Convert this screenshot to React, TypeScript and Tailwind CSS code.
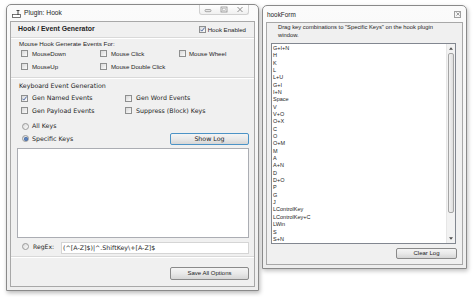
import React from "react";

const UI = "font-['Liberation_Sans',Arial,sans-serif]";
const VD = "font-['DejaVu_Sans',Verdana,sans-serif]";

function Check({ checked }: { checked?: boolean }) {
  return (
    <span className="relative inline-block w-[7px] h-[7px] shrink-0 border border-[#8e8f8f] bg-linear-to-br from-[#d8d8d8] to-[#fbfbfb]">
      {checked && (
        <svg viewBox="0 0 7 7" className="absolute left-[-1px] top-[-1px] w-[7px] h-[7px]">
          <path d="M1.4 3.7 L2.8 5.1 L5.7 1.5" fill="none" stroke="#4f6aa3" strokeWidth="1" />
        </svg>
      )}
    </span>
  );
}

function Radio({ checked }: { checked?: boolean }) {
  return (
    <span className="relative inline-flex items-center justify-center w-[7px] h-[7px] shrink-0 rounded-full border border-[#9a9a9a] bg-linear-to-br from-[#dadada] to-[#fcfcfc]">
      {checked && <span className="block w-[4px] h-[4px] rounded-full bg-radial from-[#6f9ad6] to-[#1d3f7c]" />}
    </span>
  );
}

function Btn({ label, blue, font, w }: { label: string; blue?: boolean; font: string; w: string }) {
  return (
    <div
      className={`${w} h-full flex items-center justify-center rounded-[2px] border ${
        blue ? "border-[#4c93c6]" : "border-[#8a8a8a]"
      } bg-linear-to-b from-[#f4f4f4] via-[#e9e9e9] to-[#d6d6d6] text-[#1a1a1a] ${font}`}
    >
      {label}
    </div>
  );
}

function Sep() {
  return (
    <div className="flex flex-col">
      <div className="h-px bg-[#d9d9d9]" />
      <div className="h-px bg-white" />
    </div>
  );
}

const keys = [
  "G+I+N",
  "H",
  "K",
  "L",
  "L+U",
  "G+I",
  "I+N",
  "Space",
  "V",
  "V+O",
  "O+X",
  "C",
  "O",
  "O+M",
  "M",
  "A",
  "A+N",
  "D",
  "D+O",
  "P",
  "G",
  "J",
  "LControlKey",
  "LControlKey+C",
  "LWin",
  "S",
  "S+N",
];

export default function App() {
  return (
    <div className="relative w-[474px] h-[297px] bg-white overflow-hidden">
      {/* Left window: Plugin: Hook */}
      <div className="absolute left-[6px] top-[4px] w-[253px] h-[287px] flex flex-col rounded-t-[5px] border border-[#8a8a8a] bg-linear-to-b from-[#fbfbfb] to-[#eeeeee] shadow-[1px_2px_4px_rgba(0,0,0,0.28)]">
        <div className="h-[16px] flex items-center pl-[5px] pr-[9px]">
          <svg viewBox="0 0 9 9" className="w-[9px] h-[9px] shrink-0">
            <rect x="0.5" y="5.5" width="8" height="3" fill="#fff" stroke="#555" strokeWidth="0.8" />
            <path d="M6 6 V1.5 M4.5 1.5 H7.5" stroke="#333" strokeWidth="0.9" fill="none" />
          </svg>
          <span className={`${UI} text-[6.7px] text-[#1e1e1e] ml-[3px] mt-[1px]`}>Plugin: Hook</span>
          <div className="ml-auto self-start h-[10px] w-[50px] flex items-center justify-around border border-t-0 border-[#d0d0d0] rounded-b-[3px] bg-linear-to-b from-[#ffffff] to-[#f0f0f0]">
            <svg viewBox="0 0 8 6" className="w-[8px] h-[6px]">
              <rect x="1" y="2.5" width="6" height="2.2" rx="1" fill="#e8e8e8" stroke="#8d8d8d" strokeWidth="0.7" />
            </svg>
            <svg viewBox="0 0 8 7" className="w-[8px] h-[7px]">
              <rect x="1" y="1" width="6" height="5" fill="none" stroke="#8d8d8d" strokeWidth="0.8" />
              <rect x="2.5" y="2.5" width="3" height="2" fill="none" stroke="#b0b0b0" strokeWidth="0.6" />
            </svg>
            <svg viewBox="0 0 8 7" className="w-[8px] h-[7px]">
              <path d="M1.5 1 L6.5 6 M6.5 1 L1.5 6" stroke="#8d8d8d" strokeWidth="1" />
            </svg>
          </div>
        </div>
        <div className="flex-1 mx-[3px] mb-[3px] border border-[#a8a8a8] bg-[#f0f0f0] flex flex-col text-[#1e1e1e]">
          {/* header */}
          <div className="h-[15px] flex items-center justify-between pl-[7px] pr-[8px]">
            <span className={`${UI} text-[6.9px] font-bold`}>Hook / Event Generator</span>
            <span className="flex items-center gap-[2px]">
              <Check checked />
              <span className={`${UI} text-[6.1px]`}>Hook Enabled</span>
            </span>
          </div>
          <Sep />
          <div className={`h-[9px] flex items-center pl-[8px] ${UI} text-[6.2px]`}>Mouse Hook Generate Events For:</div>
          <div className={`h-[12px] flex items-center pl-[10px] ${UI} text-[6.1px]`}>
            <span className="w-[79px] flex items-center gap-[4px]">
              <Check />
              MouseDown
            </span>
            <span className="w-[79px] flex items-center gap-[4px]">
              <Check />
              Mouse Click
            </span>
            <span className="flex items-center gap-[3px]">
              <Check />
              Mouse Wheel
            </span>
          </div>
          <div className={`h-[13px] flex items-center pl-[10px] ${UI} text-[6.1px]`}>
            <span className="w-[79px] flex items-center gap-[4px]">
              <Check />
              MouseUp
            </span>
            <span className="flex items-center gap-[4px]">
              <Check />
              Mouse Double Click
            </span>
          </div>
          <div className="h-[4px]" />
          <Sep />
          <div className={`h-[13px] flex items-center pl-[8px] ${VD} text-[6.3px]`}>Keyboard Event Generation</div>
          <div className={`h-[12px] flex items-center pl-[10px] ${VD} text-[6.3px]`}>
            <span className="w-[104px] flex items-center gap-[4px]">
              <Check checked />
              Gen Named Events
            </span>
            <span className="flex items-center gap-[4px]">
              <Check />
              Gen Word Events
            </span>
          </div>
          <div className={`h-[13px] flex items-center pl-[10px] ${VD} text-[6.3px]`}>
            <span className="w-[104px] flex items-center gap-[4px]">
              <Check />
              Gen Payload Events
            </span>
            <span className="flex items-center gap-[4px]">
              <Check />
              Suppress (Block) Keys
            </span>
          </div>
          <div className="h-[3px]" />
          <div className={`h-[12px] flex items-center pl-[11px] ${VD} text-[6.3px]`}>
            <span className="flex items-center gap-[3px]">
              <Radio />
              All Keys
            </span>
          </div>
          <div className={`h-[13px] flex items-center pl-[11px] pr-[5px] ${VD} text-[6.3px]`}>
            <span className="flex items-center gap-[3px]">
              <Radio checked />
              Specific Keys
            </span>
            <div className="ml-auto h-[12px]">
              <Btn label="Show Log" blue font={`${VD} text-[6.3px]`} w="w-[79px]" />
            </div>
          </div>
          <div className="h-[3px]" />
          <div className="h-[90px] ml-[6px] mr-[5px] bg-white border border-[#abadb3]" />
          <div className={`h-[18px] flex items-center pl-[11px] pr-[5px] ${VD} text-[6.1px]`}>
            <span className="flex items-center gap-[4px]">
              <Radio />
              RegEx:
            </span>
            <div className="ml-[7px] flex-1 h-[12px] mt-[1px] bg-white border border-[#d5d5d5] flex items-center pl-[1px] text-[6.3px] whitespace-nowrap overflow-hidden">
              {"(^[A-Z]$)|^.ShiftKey\\+[A-Z]$"}
            </div>
          </div>
          <Sep />
          <div className="flex-1 flex flex-col items-end pr-[5px] pt-[9px]">
            <div className="h-[13px]">
              <Btn label="Save All Options" font={`${UI} text-[6px]`} w="w-[79px]" />
            </div>
          </div>
        </div>
      </div>

      {/* Right window: hookForm */}
      <div className="absolute left-[262px] top-[5px] w-[205px] h-[264px] flex flex-col rounded-t-[5px] border border-[#8a8a8a] bg-linear-to-b from-[#fbfbfb] to-[#eeeeee] shadow-[1px_2px_4px_rgba(0,0,0,0.25)]">
        <div className="h-[16px] flex items-center pl-[4px] pr-[5px]">
          <span className={`${UI} text-[6.4px] text-[#1e1e1e] mt-[1px]`}>hookForm</span>
          <div className="ml-auto w-[7px] h-[7px] border border-[#a0a0a0] bg-[#f6f6f6] flex items-center justify-center">
            <svg viewBox="0 0 5 5" className="w-[4px] h-[4px]">
              <path d="M0.5 0.5 L4.5 4.5 M4.5 0.5 L0.5 4.5" stroke="#7a7a7a" strokeWidth="0.9" />
            </svg>
          </div>
        </div>
        <div className="flex-1 mx-[3px] mb-[3px] border border-[#a8a8a8] bg-[#f0f0f0] flex flex-col text-[#1e1e1e]">
          <div className={`pl-[11px] pt-[1px] ${UI} text-[5.8px] leading-[7.7px]`}>
            <div>Drag key combinations to "Specific Keys" on the hook plugin</div>
            <div>window.</div>
          </div>
          <div className="mt-[4px] ml-[4px] mr-[6px] h-[201px] bg-white border border-[#828790] flex">
            <div className={`flex-1 pl-[1px] pt-[0.5px] ${UI} text-[5.5px] leading-[7.35px] overflow-hidden`}>
              {keys.map((k, i) => (
                <div key={i} className="whitespace-nowrap">
                  {k}
                </div>
              ))}
            </div>
            <div className="w-[9px] flex flex-col bg-[#f2f2f2] border-l border-[#e6e6e6]">
              <div className="h-[9px] flex items-center justify-center">
                <svg viewBox="0 0 5 3" className="w-[4px] h-[3px]">
                  <path d="M0 3 L2.5 0 L5 3 Z" fill="#4d4d4d" />
                </svg>
              </div>
              <div className="mx-[1px] h-[160px] rounded-[2px] border border-[#a5a5a5] bg-linear-to-r from-[#f2f2f2] to-[#dedede]" />
              <div className="flex-1" />
              <div className="h-[9px] flex items-center justify-center">
                <svg viewBox="0 0 5 3" className="w-[4px] h-[3px]">
                  <path d="M0 0 L2.5 3 L5 0 Z" fill="#4d4d4d" />
                </svg>
              </div>
            </div>
          </div>
          <div className="mt-[4px] flex justify-end pr-[5px]">
            <div className="h-[11px]">
              <Btn label="Clear Log" font={`${UI} text-[6px]`} w="w-[61px]" />
            </div>
          </div>
        </div>
      </div>
    </div>
  );
}
